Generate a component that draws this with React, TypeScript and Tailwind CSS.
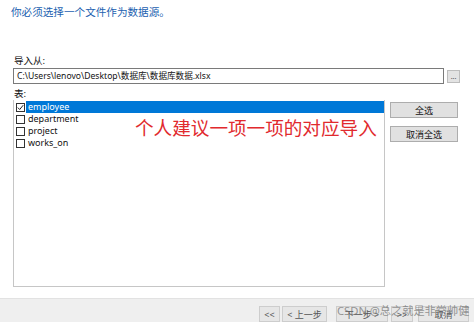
const font = { fontFamily: '"Noto Sans", "Noto Sans CJK SC", sans-serif' };

const tables = ["employee", "department", "project", "works_on"];

const CheckBox = ({ checked }: { checked: boolean }) => (
  <span className="w-[9px] h-[9px] border border-[#333] bg-white flex items-center justify-center shrink-0">
    {checked && (
      <svg width="7" height="7" viewBox="0 0 7 7">
        <path d="M0.8 3.6 L2.7 5.5 L6.2 1.2" fill="none" stroke="#222" strokeWidth="1" />
      </svg>
    )}
  </span>
);

const FooterButton = ({ label, className }: { label: string; className: string }) => (
  <button className={`h-[16px] bg-[#e6e6e6] border border-[#cdcdcd] text-[9px] text-[#555] leading-none ${className}`}>
    {label}
  </button>
);

export default function App() {
  return (
    <div className="w-[474px] h-[322px] bg-white flex flex-col overflow-hidden text-[#111]" style={font}>
      {/* header */}
      <div className="pl-[11px] pt-[6px] text-[10.6px] leading-[13px] text-[#1c5fb0]">
        你必须选择一个文件作为数据源。
      </div>

      <div className="pl-[14px] mt-[37px] text-[9.5px] leading-[10px]">导入从:</div>
      <div className="flex items-center mt-[2px] pl-[13px]">
        <div className="w-[431px] h-[16px] border border-[#7a7a7a] flex items-center pl-[3px] text-[8.6px]">
          C:\Users\lenovo\Desktop\数据库\数据库数据.xlsx
        </div>
        <button className="ml-[3px] w-[13px] h-[13px] bg-[#e3e3e3] border border-[#bdbdbd] text-[7px] leading-none text-[#555]">
          ...
        </button>
      </div>

      <div className="pl-[14px] mt-[5px] text-[9.5px] leading-[10px]">表:</div>

      <div className="flex pl-[13px] mt-[1px]">
        <div className="relative w-[372px] h-[187px] border-l border-b border-[#c6c6c6] border-r pt-[1px]">
          {tables.map((t, i) => (
            <div key={t} className="h-[12px] flex items-center">
              <div className="w-[12px] flex justify-center">
                <CheckBox checked={i === 0} />
              </div>
              <div
                className={`flex-1 h-full flex items-center pl-[2px] text-[9px] ${
                  i === 0 ? "bg-[#0078d7] text-white" : ""
                }`}
              >
                {t}
              </div>
            </div>
          ))}
          <div className="absolute left-[121px] top-[18px] text-[18.6px] leading-[20px] text-[#e12a2e] whitespace-nowrap">
            个人建议一项一项的对应导入
          </div>
        </div>
        <div className="ml-[5px] flex flex-col gap-[8px] pt-[2px]">
          <button className="w-[68px] h-[16px] bg-[#e1e1e1] border border-[#adadad] text-[9px] leading-none">
            全选
          </button>
          <button className="w-[68px] h-[16px] bg-[#e1e1e1] border border-[#adadad] text-[9px] leading-none">
            取消全选
          </button>
        </div>
      </div>

      {/* footer */}
      <div className="relative mt-auto h-[24px] bg-[#efefef] border-t border-[#e2e2e2] flex items-start pt-[7px] pl-[259px]">
        <FooterButton label="<<" className="w-[21px]" />
        <FooterButton label="< 上一步" className="ml-[2px] w-[45px]" />
        <FooterButton label="下一步 >" className="ml-[9px] w-[52px]" />
        <FooterButton label=">>" className="ml-[3px] w-[22px]" />
        <FooterButton label="取消" className="ml-[5px] w-[51px]" />
        <div className="absolute left-[337px] top-[5px] text-[11.2px] leading-[14px] text-[#6b6b6b]/70 whitespace-nowrap">
          CSDN @总之就是非常帅健
        </div>
      </div>
    </div>
  );
}
